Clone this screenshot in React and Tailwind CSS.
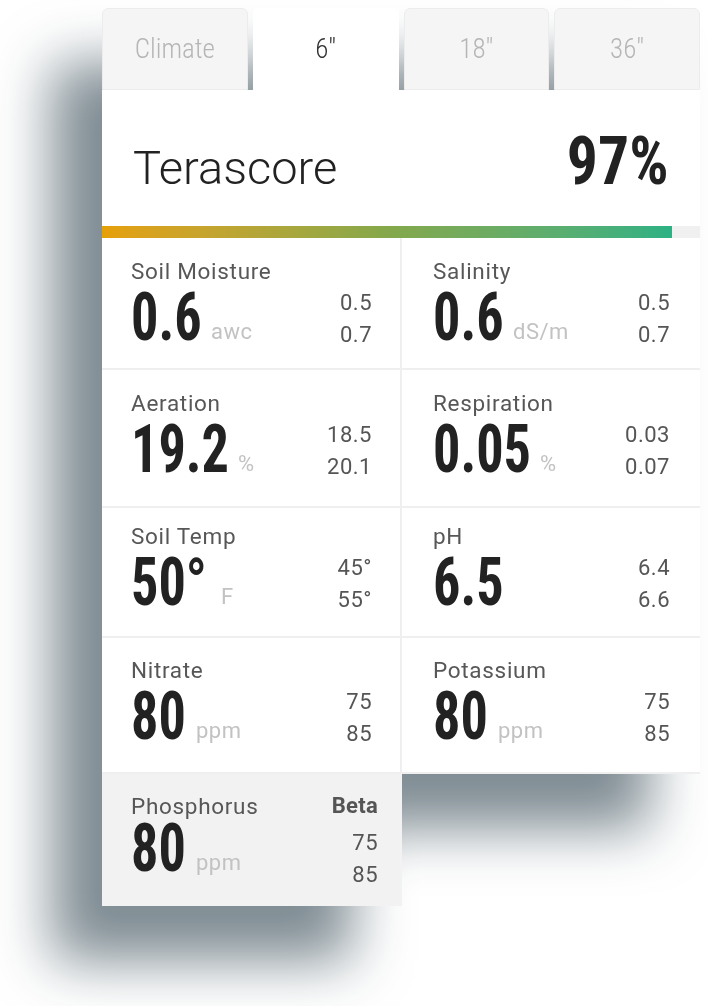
const tabs = [
  { label: "Climate", active: false },
  { label: "6″", active: true },
  { label: "18″", active: false },
  { label: "36″", active: false },
];

// nw = width of the squeezed number, so the unit sits right after it
const rows = [
  {
    box: "h-[130px] pt-[20px]",
    cells: [
      { label: "Soil Moisture", value: "0.6", nw: "w-[70px]", unit: "awc", lo: "0.5", hi: "0.7" },
      { label: "Salinity", value: "0.6", nw: "w-[70px]", unit: "dS/m", lo: "0.5", hi: "0.7" },
    ],
  },
  {
    box: "h-[136px] pt-[20px]",
    cells: [
      { label: "Aeration", value: "19.2", nw: "w-[97px]", unit: "%", lo: "18.5", hi: "20.1" },
      { label: "Respiration", value: "0.05", nw: "w-[97px]", unit: "%", lo: "0.03", hi: "0.07" },
    ],
  },
  {
    box: "h-[128px] pt-[15px]",
    cells: [
      { label: "Soil Temp", value: "50°", nw: "w-[80px]", unit: "F", lo: "45°", hi: "55°" },
      { label: "pH", value: "6.5", nw: "w-[69px]", unit: "", lo: "6.4", hi: "6.6" },
    ],
  },
  {
    box: "h-[134px] pt-[19px]",
    cells: [
      { label: "Nitrate", value: "80", nw: "w-[55px]", unit: "ppm", lo: "75", hi: "85" },
      { label: "Potassium", value: "80", nw: "w-[55px]", unit: "ppm", lo: "75", hi: "85" },
    ],
  },
];

const sans = "font-['Roboto',sans-serif]";
const cond = "font-['Roboto_Condensed','Roboto',sans-serif]";

function Metric({ label, value, nw, unit, lo, hi, beta }) {
  return (
    <div className="flex justify-between">
      <div className="flex flex-col">
        <div className={`${sans} text-[22.5px] leading-[26px] tracking-[0.7px] text-[#575757]`}>{label}</div>
        <div className={`flex items-end gap-[10px] ${beta ? "-mt-[4px]" : ""}`}>
          <span className={`${nw} inline-block whitespace-nowrap`}>
            <span className={`${cond} inline-block origin-left scale-x-[0.81] font-bold text-[67px] leading-[67px] text-[#222]`}>
              {value}
            </span>
          </span>
          {unit && (
            <span className={`${sans} text-[22px] leading-[26px] tracking-[0.5px] mb-[6px] text-[#c2c2c2]`}>{unit}</span>
          )}
        </div>
      </div>
      <div className={`${sans} flex flex-col items-end justify-end text-[22px] leading-[32px] tracking-[0.5px] text-[#555]`}>
        {beta && <div className="font-bold leading-[26px] mb-[8px] tracking-[0.3px]">Beta</div>}
        <div>{lo}</div>
        <div>{hi}</div>
      </div>
    </div>
  );
}

export default function App() {
  return (
    <div className="min-h-screen bg-white">
      <div className="pl-[102px] pt-[8px] w-[700px]">
        <div className="drop-shadow-[-50px_55px_28px_rgba(0,25,40,0.5)]">
          {/* tabs */}
          <div className="grid grid-cols-4 gap-[5px]">
            {tabs.map((t) => (
              <div
                key={t.label}
                className={
                  t.active
                    ? `${cond} h-[82px] rounded-t-[6px] bg-white flex items-center justify-center text-[27px] font-light text-[#333]`
                    : `${cond} h-[82px] rounded-t-[6px] bg-[#f5f5f5] border border-[#ececec] flex items-center justify-center text-[27px] font-light text-[#b5b5b5]`
                }
              >
                {t.label}
              </div>
            ))}
          </div>

          {/* main card */}
          <div className="bg-white w-[598px]">
            <div className="h-[136px] flex items-baseline justify-between pl-[31px] pr-[32px] pt-[38px]">
              <span className={`${sans} font-light text-[47px] leading-[47px] text-[#222]`}>Terascore</span>
              <span className={`${cond} inline-block origin-right scale-x-[0.92] font-bold text-[67px] leading-[67px] text-[#222]`}>
                97%
              </span>
            </div>
            <div className="h-[12px] bg-[#f0f0f0]">
              <div className="h-full w-[570px] bg-gradient-to-r from-[#e6a006] via-[#84a84a] to-[#2bb184]" />
            </div>

            {rows.map((r, i) => (
              <div key={i} className="grid grid-cols-[300px_298px] border-b-2 border-[#efefef]">
                {r.cells.map((c, j) => (
                  <div
                    key={c.label}
                    className={`${r.box} ${j === 0 ? "border-r-2 border-[#efefef] pl-[29px] pr-[28px]" : "pl-[31px] pr-[30px]"}`}
                  >
                    <Metric {...c} />
                  </div>
                ))}
              </div>
            ))}
          </div>

          {/* phosphorus */}
          <div className="w-[300px] h-[132px] bg-[#f2f2f2] pl-[29px] pr-[24px] pt-[19px]">
            <Metric label="Phosphorus" value="80" nw="w-[55px]" unit="ppm" lo="75" hi="85" beta />
          </div>
        </div>
      </div>
    </div>
  );
}
